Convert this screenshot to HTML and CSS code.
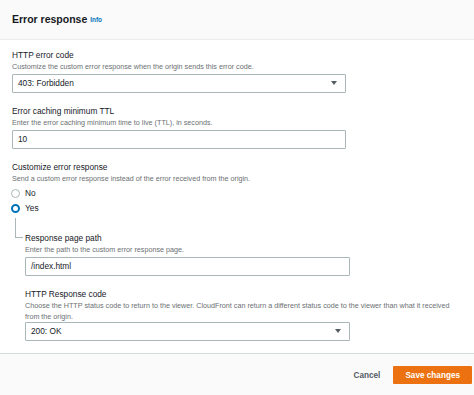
FILE: index.html
```html
<!DOCTYPE html>
<html lang="en">

<head>
    <meta charset="UTF-8">
    <meta name="viewport" content="width=device-width, initial-scale=1.0">
    <title>Error response</title>
    <link rel="stylesheet" href="styles.css">
</head>

<body>

    <div class="panel">
        <div class="panel-header">
            <h2>Error response</h2>
            <a class="info-link" href="#">Info</a>
        </div>

        <div class="panel-body">
            <div class="form-group">
                <label class="form-label">HTTP error code</label>
                <p class="form-desc">Customize the custom error response when the origin sends this error code.</p>
                <div class="select-box">
                    <span>403: Forbidden</span>
                    <span class="caret"></span>
                </div>
            </div>

            <div class="form-group">
                <label class="form-label">Error caching minimum TTL</label>
                <p class="form-desc">Enter the error caching minimum time to live (TTL), in seconds.</p>
                <div class="text-input">10</div>
            </div>

            <div class="form-group">
                <label class="form-label">Customize error response</label>
                <p class="form-desc">Send a custom error response instead of the error received from the origin.</p>
                <div class="radio-row">
                    <span class="radio"></span>
                    <span>No</span>
                </div>
                <div class="radio-row">
                    <span class="radio checked"></span>
                    <span>Yes</span>
                </div>
            </div>

            <div class="nested">
                <div class="tree-line"></div>
                <div class="nested-fields">
                    <div class="form-group">
                        <label class="form-label">Response page path</label>
                        <p class="form-desc">Enter the path to the custom error response page.</p>
                        <div class="text-input">/index.html</div>
                    </div>

                    <div class="form-group">
                        <label class="form-label">HTTP Response code</label>
                        <p class="form-desc tight">Choose the HTTP status code to return to the viewer. CloudFront can return a different status code to the viewer than what it received from the origin.</p>
                        <div class="select-box">
                            <span>200: OK</span>
                            <span class="caret"></span>
                        </div>
                    </div>
                </div>
            </div>
        </div>

        <div class="panel-footer">
            <button class="btn-link">Cancel</button>
            <button class="btn-primary">Save changes</button>
        </div>
    </div>

</body>

</html>
```

FILE: styles.css
```css
body {
    font-family: "Liberation Sans", Arial, sans-serif;
    margin: 0;
    padding: 0;
    background-color: #ffffff;
    color: #16191f;
}

.panel {
    width: 474px;
    height: 395px;
    display: flex;
    flex-direction: column;
}

.panel-header {
    height: 39px;
    background-color: #fafafa;
    border-bottom: 1px solid #eaeded;
    display: flex;
    align-items: center;
    padding-left: 12px;
    gap: 3px;
}

.panel-header h2 {
    margin: 0;
    font-size: 10.5px;
    font-weight: bold;
}

.info-link {
    color: #0073bb;
    font-size: 6.4px;
    font-weight: bold;
    text-decoration: none;
    margin-top: 1px;
}

.panel-body {
    flex: 1;
    padding: 9px 0 0 12px;
}

.form-group {
    margin-bottom: 12px;
}

.form-label {
    display: block;
    font-size: 8.3px;
    line-height: 12px;
}

.form-desc {
    margin: 0 0 2px 0;
    font-size: 7.2px;
    line-height: 11px;
    color: #6b6f73;
}

.form-desc.tight {
    margin-bottom: 0;
}

.select-box,
.text-input {
    box-sizing: border-box;
    width: 334px;
    height: 19px;
    border: 1px solid #aab7b8;
    border-radius: 1px;
    padding: 0 5px;
    font-size: 8.3px;
    display: flex;
    align-items: center;
    justify-content: space-between;
}

.caret {
    width: 0;
    height: 0;
    border-left: 3px solid transparent;
    border-right: 3px solid transparent;
    border-top: 4px solid #545b64;
    margin-right: 3px;
}

.radio-row {
    display: flex;
    align-items: center;
    gap: 5px;
    height: 15px;
    font-size: 8.3px;
}

.radio {
    box-sizing: border-box;
    width: 9px;
    height: 9px;
    border-radius: 50%;
    border: 1px solid #aab7b8;
    background: #ffffff;
    margin-left: -1px;
}

.radio.checked {
    border: 2.6px solid #0073bb;
}

.nested {
    display: flex;
    margin-top: -10px;
}

.tree-line {
    flex-shrink: 0;
    width: 7px;
    height: 19px;
    margin-left: 3px;
    border-left: 1px solid #aab7b8;
    border-bottom: 1px solid #aab7b8;
}

.nested-fields {
    padding-top: 14px;
    margin-left: 2px;
}

.nested-fields .select-box,
.nested-fields .text-input {
    width: 325px;
}

.nested-fields .form-desc {
    width: 440px;
}

.panel-footer {
    height: 42px;
    background-color: #fafafa;
    border-top: 1px solid #d5dbdb;
    display: flex;
    align-items: center;
    justify-content: flex-end;
    padding-right: 2px;
    gap: 13px;
}

.btn-link {
    background: none;
    border: none;
    font-family: inherit;
    font-size: 8.2px;
    font-weight: bold;
    color: #545b64;
    padding: 0;
    margin-top: 2px;
}

.btn-primary {
    background-color: #ec7211;
    color: #ffffff;
    border: none;
    border-radius: 1px;
    font-family: inherit;
    font-size: 8.2px;
    font-weight: bold;
    height: 18px;
    padding: 0 12px;
    margin-top: 2px;
}
```
